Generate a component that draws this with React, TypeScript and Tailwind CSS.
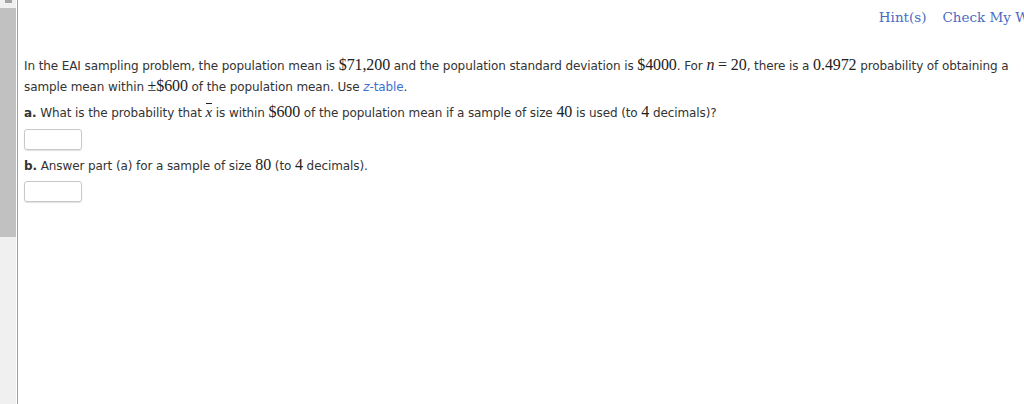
import React from "react";

const M = ({ children, i }: { children: React.ReactNode; i?: boolean }) => (
  <span
    className={"text-[16px] leading-none text-[#222] " + (i ? "italic" : "")}
    style={{ fontFamily: '"Liberation Serif", "DejaVu Serif", serif' }}
  >
    {children}
  </span>
);

export default function App() {
  return (
    <div className="flex h-[404px] w-[1024px] overflow-hidden bg-white">
      <div className="flex w-[16px] shrink-0 flex-col bg-[#f0f0f0]">
        <div className="flex h-[8px] items-start justify-center">
          <div className="h-[3px] w-[7px] bg-[#a3a3a3]" />
        </div>
        <div className="h-[229px] w-full bg-[#c1c1c1]" />
      </div>
      <div className="w-[1px] shrink-0 bg-white" />
      <div className="w-[1px] shrink-0 bg-[#a0a0a0]" />
      <div
        className="flex min-w-0 flex-1 flex-col overflow-hidden pl-[6px] text-[12px] text-[#333]"
        style={{ fontFamily: '"DejaVu Sans", Verdana, sans-serif' }}
      >
        <div
          className="flex h-[34px] items-center justify-end gap-[16px] whitespace-nowrap text-[13.5px] text-[#4a6cc4]"
          style={{ fontFamily: '"DejaVu Serif", Georgia, serif', marginRight: -27 }}
        >
          <span>Hint(s)</span>
          <span>Check My Work</span>
        </div>
        <div className="mt-[22px] whitespace-nowrap leading-[21px] tracking-[-0.1px]">
          <div>
            In the EAI sampling problem, the population mean is <M>$71,200</M> and the population standard deviation is{" "}
            <M>$4000</M>. For <M i>n</M> <M>= 20</M>, there is a <M>0.4972</M> probability of obtaining a
          </div>
          <div>
            sample mean within <M>±$600</M> of the population mean. Use{" "}
            <span className="text-[#3d6fd0]">
              <span className="italic">z</span>-table
            </span>
            .
          </div>
        </div>
        <div className="mt-[5px] whitespace-nowrap leading-[21px] tracking-[-0.1px]">
          <span className="font-bold">a.</span> What is the probability that{" "}
          <span
            className="border-t border-[#222] text-[15px] italic leading-none text-[#222]"
            style={{ fontFamily: '"Liberation Serif", serif' }}
          >
            x
          </span>{" "}
          is within <M>$600</M> of the population mean if a sample of size <M>40</M> is used (to <M>4</M> decimals)?
        </div>
        <div className="mt-[5px] h-[21px] w-[58px] rounded-[3px] border border-[#c8c8c8] shadow-[0_1px_1px_rgba(0,0,0,0.12)]" />
        <div className="mt-[6px] whitespace-nowrap leading-[21px] tracking-[-0.1px]">
          <span className="font-bold">b.</span> Answer part (a) for a sample of size <M>80</M> (to <M>4</M> decimals).
        </div>
        <div className="mt-[4px] h-[21px] w-[58px] rounded-[3px] border border-[#c8c8c8] shadow-[0_1px_1px_rgba(0,0,0,0.12)]" />
      </div>
    </div>
  );
}
